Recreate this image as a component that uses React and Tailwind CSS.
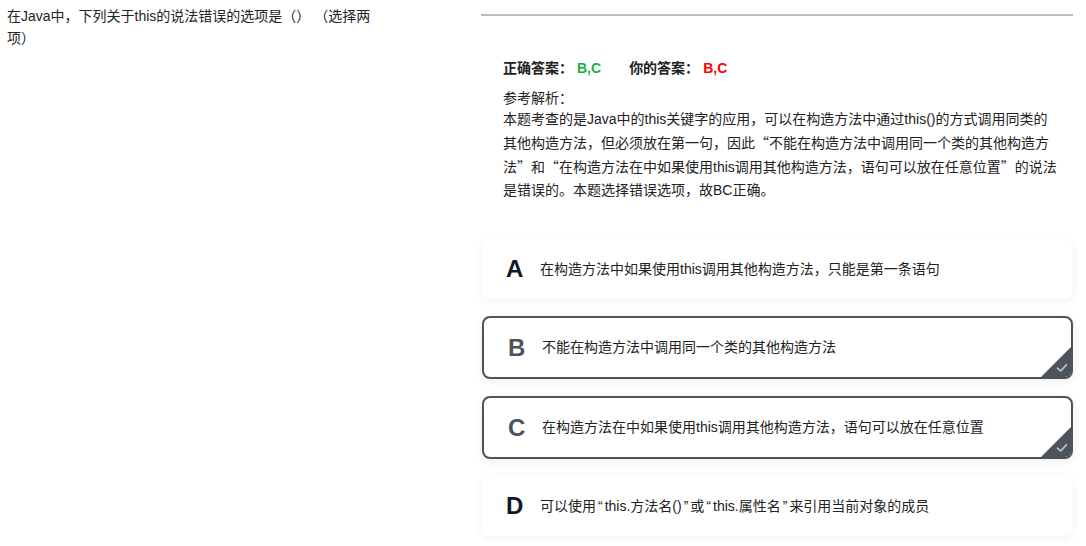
import React from 'react';

const options = [
  { key: 'A', text: '在构造方法中如果使用this调用其他构造方法，只能是第一条语句', picked: false },
  { key: 'B', text: '不能在构造方法中调用同一个类的其他构造方法', picked: true },
  { key: 'C', text: '在构造方法在中如果使用this调用其他构造方法，语句可以放在任意位置', picked: true },
  { key: 'D', text: '可以使用“this.方法名()”或“this.属性名”来引用当前对象的成员', picked: false },
];

const font = { fontFamily: '"Liberation Sans", "Noto Sans CJK SC", sans-serif' };

// curly quotes: full width in the explanation, a bit padded in the options
function Txt({ children, narrow }) {
  const parts = children.split(/([“”])/);
  return parts.map((p, i) => {
    if (p !== '“' && p !== '”') return <React.Fragment key={i}>{p}</React.Fragment>;
    if (narrow) return <span key={i} className="mx-[2px]">{p}</span>;
    return <span key={i} className="font-['Noto_Sans_CJK_SC']">{p}</span>;
  });
}

function OptionCard({ item }) {
  if (item.picked) {
    return (
      <div className="relative flex items-center h-[63px] pl-[24px] rounded-[8px] border-2 border-[#4d535b] bg-white shadow-[0_2px_8px_rgba(0,0,0,0.08)] overflow-hidden">
        <span className="w-[34px] text-[24px] font-semibold text-[#4d535b] leading-none">{item.key}</span>
        <span className="text-[14px] text-[#222]"><Txt narrow>{item.text}</Txt></span>
        <div className="absolute right-0 bottom-0 w-[30px] h-[30px] bg-[#4d535b] [clip-path:polygon(100%_0,100%_100%,0_100%)]">
          <svg className="absolute right-[3px] bottom-[4px]" width="12" height="10" viewBox="0 0 12 10" fill="none">
            <path d="M1.5 5.2 L4.6 8 L10.5 1.8" stroke="#c9ccd0" strokeWidth="1.6" strokeLinecap="round" strokeLinejoin="round" />
          </svg>
        </div>
      </div>
    );
  }
  return (
    <div className="flex items-center h-[60px] pl-[24px] rounded-[8px] bg-white shadow-[0_2px_10px_rgba(0,0,0,0.06)]">
      <span className="w-[34px] text-[24px] font-semibold text-[#111827] leading-none">{item.key}</span>
      <span className="text-[14px] text-[#222]"><Txt narrow>{item.text}</Txt></span>
    </div>
  );
}

export default function App() {
  return (
    <div className="flex w-[1086px] h-[546px] bg-white text-[#222] overflow-hidden" style={font}>
      {/* question */}
      <div className="w-[481px] shrink-0 pl-[7px] pt-[5px]">
        <p className="w-[370px] text-[14px] leading-[22px] text-[#222]">
          在Java中，下列关于this的说法错误的选项是（） （选择两项）
        </p>
      </div>

      {/* answer panel */}
      <div className="w-[592px] shrink-0 pt-[14px]">
        <div className="h-[2px] bg-[#bcbcc0]" />

        <div className="pl-[22px] pt-[42px]">
          <div className="flex items-center text-[14px] leading-[20px] font-semibold">
            <span className="text-[#222]">正确答案：</span>
            <span className="ml-[4px] text-[#1aaf3c]">B,C</span>
            <span className="ml-[28px] text-[#222]">你的答案：</span>
            <span className="ml-[4px] text-[#ff0000]">B,C</span>
          </div>
          <div className="mt-[10px] text-[14px] leading-[20px] text-[#222]">参考解析：</div>
          <p className="w-[555px] text-[14px] leading-[23px] text-[#222]">
            <Txt>本题考查的是Java中的this关键字的应用，可以在构造方法中通过this()的方式调用同类的其他构造方法，但必须放在第一句，因此“不能在构造方法中调用同一个类的其他构造方法”和“在构造方法在中如果使用this调用其他构造方法，语句可以放在任意位置”的说法是错误的。本题选择错误选项，故BC正确。</Txt>
          </p>
        </div>

        <div className="flex flex-col gap-[17px] mt-[37px] pl-[1px]">
          {options.map((o) => (
            <OptionCard key={o.key} item={o} />
          ))}
        </div>
      </div>
    </div>
  );
}
